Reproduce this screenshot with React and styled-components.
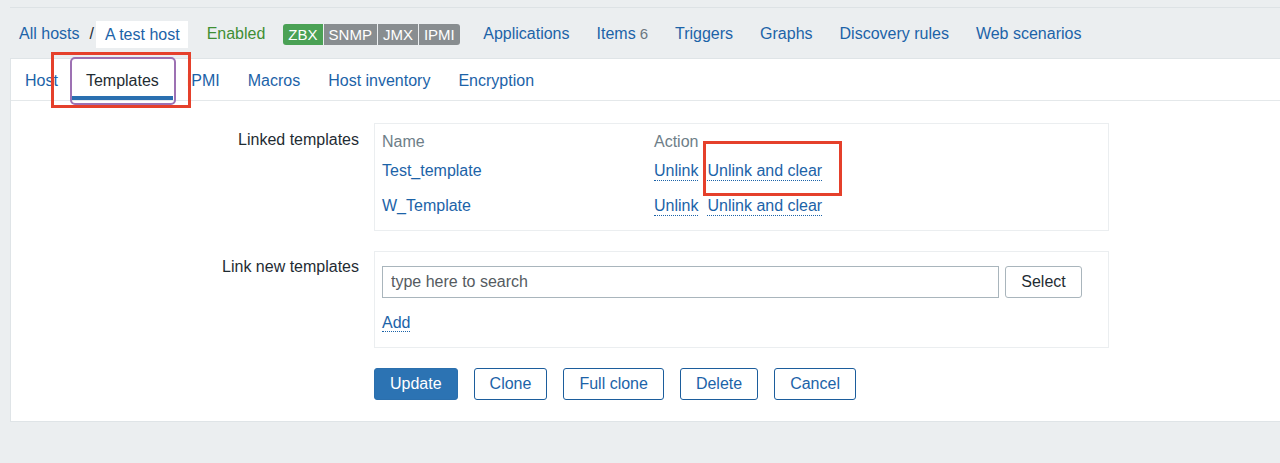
import React from "react";
import styled, { createGlobalStyle } from "styled-components";

const GlobalStyle = createGlobalStyle`
  html, body {
    margin: 0;
    padding: 0;
    background: #ebeef0;
    font-family: "Liberation Sans", Arial, sans-serif;
    font-size: 16px;
    color: #1f2c33;
  }
`;

const LINK = "#1c63a8";

const Page = styled.div`
  position: relative;
  width: 1280px;
  height: 463px;
  padding-top: 7px;
  box-sizing: border-box;
  overflow: hidden;
`;

const HostNav = styled.div`
  margin-left: 10px;
  height: 51px;
  border-top: 1px solid #dde2e5;
  display: flex;
  align-items: center;
  padding: 2px 0 0 9px;
  box-sizing: border-box;
`;

const Crumb = styled.span`
  color: ${LINK};
`;

const Slash = styled.span`
  margin: 0 2px 0 10px;
  color: #1f2c33;
`;

const CurrentCrumb = styled.span`
  background: #fff;
  color: ${LINK};
  height: 27px;
  line-height: 27px;
  padding: 0 8px 0 9px;
`;

const Status = styled.span`
  color: #3f8f34;
  margin-left: 19px;
`;

const Tags = styled.div`
  display: flex;
  margin-left: 18px;
  margin-right: 10px;
  gap: 1px;
  border-radius: 3px;
  overflow: hidden;
`;

const Tag = styled.span`
  background: ${(p) => (p.$on ? "#4aa155" : "#888d90")};
  color: #fff;
  font-size: 15px;
  height: 21px;
  line-height: 21px;
  padding: 0 5px;
`;

const NavLink = styled.span`
  color: ${LINK};
  padding: 0 13.5px;
`;

const Count = styled.span`
  color: #6b7780;
  font-size: 15px;
  margin-left: 4px;
`;

const Panel = styled.div`
  margin-left: 10px;
  background: #fff;
  border: 1px solid #dfe4e7;
  border-right: none;
  height: 364px;
  box-sizing: border-box;
`;

const TabBar = styled.div`
  display: flex;
  height: 42px;
  border-bottom: 1px solid #e4e8ea;
  box-sizing: border-box;
`;

const Tab = styled.div`
  padding: 6px 14px 0;
  display: flex;
  align-items: center;
  color: ${(p) => (p.$active ? "#1f2c33" : LINK)};
  border-bottom: 4px solid ${(p) => (p.$active ? "#2a6fb0" : "transparent")};
`;

const Form = styled.div`
  padding-top: 22px;
  display: flex;
  flex-direction: column;
  gap: 20px;
`;

const FormRow = styled.div`
  display: flex;
  align-items: flex-start;
`;

const Label = styled.div`
  width: 348px;
  text-align: right;
  padding-top: ${(p) => p.$top}px;
  padding-right: 15px;
  flex-shrink: 0;
`;

const FieldBox = styled.div`
  width: 735px;
  border: 1px solid #ebeef0;
  box-sizing: border-box;
  padding: ${(p) => p.$pad};
`;

const TRow = styled.div`
  display: flex;
  align-items: center;
  height: ${(p) => p.$h}px;
`;

const NameCol = styled.div`
  width: 272px;
  color: ${(p) => (p.$head ? "#6e7e88" : LINK)};
`;

const ActionCol = styled.div`
  display: flex;
  gap: 9px;
  color: ${(p) => (p.$head ? "#6e7e88" : LINK)};
`;

const DotLink = styled.span`
  color: ${LINK};
  border-bottom: 1px dotted ${LINK};
  line-height: 18px;
`;

const SearchLine = styled.div`
  display: flex;
  gap: 6px;
`;

const SearchInput = styled.input`
  width: 617px;
  height: 32px;
  box-sizing: border-box;
  border: 1px solid #a9b5bc;
  padding: 0 8px;
  font-family: inherit;
  font-size: 16px;
  color: #1f2c33;
  outline: none;
  &::placeholder {
    color: #555b5f;
  }
`;

const SelectButton = styled.button`
  width: 77px;
  height: 32px;
  border: 1px solid #a9b5bc;
  border-radius: 3px;
  background: #fff;
  font-family: inherit;
  font-size: 16px;
  color: #1f2c33;
`;

const AddRow = styled.div`
  margin-top: 16px;
`;

const Buttons = styled.div`
  display: flex;
  gap: 16px;
  margin-left: 363px;
`;

const Button = styled.button`
  height: 32px;
  padding: 0 15px;
  border-radius: 3px;
  font-family: inherit;
  font-size: 16px;
  border: 1px solid ${(p) => (p.$primary ? "#2b6fad" : "#1c5d9c")};
  background: ${(p) => (p.$primary ? "#2c73b3" : "#fff")};
  color: ${(p) => (p.$primary ? "#fff" : LINK)};
`;

const RedMark = styled.div`
  position: absolute;
  border: 3px solid #e5402b;
  box-sizing: border-box;
`;

const FocusRing = styled.div`
  position: absolute;
  border: 2px solid #9d71b3;
  border-radius: 5px;
  box-sizing: border-box;
`;

const tabs = ["Host", "Templates", "IPMI", "Macros", "Host inventory", "Encryption"];
const linked = ["Test_template", "W_Template"];

export default function App() {
  return (
    <Page>
      <GlobalStyle />
      <HostNav>
        <Crumb>All hosts</Crumb>
        <Slash>/</Slash>
        <CurrentCrumb>A test host</CurrentCrumb>
        <Status>Enabled</Status>
        <Tags>
          <Tag $on>ZBX</Tag>
          <Tag>SNMP</Tag>
          <Tag>JMX</Tag>
          <Tag>IPMI</Tag>
        </Tags>
        <NavLink>Applications</NavLink>
        <NavLink>
          Items<Count>6</Count>
        </NavLink>
        <NavLink>Triggers</NavLink>
        <NavLink>Graphs</NavLink>
        <NavLink>Discovery rules</NavLink>
        <NavLink>Web scenarios</NavLink>
      </HostNav>
      <Panel>
        <TabBar>
          {tabs.map((t) => (
            <Tab key={t} $active={t === "Templates"}>
              {t}
            </Tab>
          ))}
        </TabBar>
        <Form>
          <FormRow>
            <Label $top={8}>Linked templates</Label>
            <FieldBox $pad="6px 7px 6px">
              <TRow $h={24}>
                <NameCol $head>Name</NameCol>
                <ActionCol $head>Action</ActionCol>
              </TRow>
              {linked.map((name, i) => (
                <TRow key={name} $h={i === 0 ? 34 : 36}>
                  <NameCol>{name}</NameCol>
                  <ActionCol>
                    <DotLink>Unlink</DotLink>
                    <DotLink>Unlink and clear</DotLink>
                  </ActionCol>
                </TRow>
              ))}
            </FieldBox>
          </FormRow>
          <FormRow>
            <Label $top={7}>Link new templates</Label>
            <FieldBox $pad="14px 7px 15px">
              <SearchLine>
                <SearchInput placeholder="type here to search" />
                <SelectButton>Select</SelectButton>
              </SearchLine>
              <AddRow>
                <DotLink>Add</DotLink>
              </AddRow>
            </FieldBox>
          </FormRow>
          <Buttons>
            <Button $primary>Update</Button>
            <Button>Clone</Button>
            <Button>Full clone</Button>
            <Button>Delete</Button>
            <Button>Cancel</Button>
          </Buttons>
        </Form>
      </Panel>
      <FocusRing style={{ left: 70, top: 57, width: 106, height: 48 }} />
      <RedMark style={{ left: 51, top: 52, width: 140, height: 56 }} />
      <RedMark style={{ left: 703, top: 141, width: 139, height: 55 }} />
    </Page>
  );
}
